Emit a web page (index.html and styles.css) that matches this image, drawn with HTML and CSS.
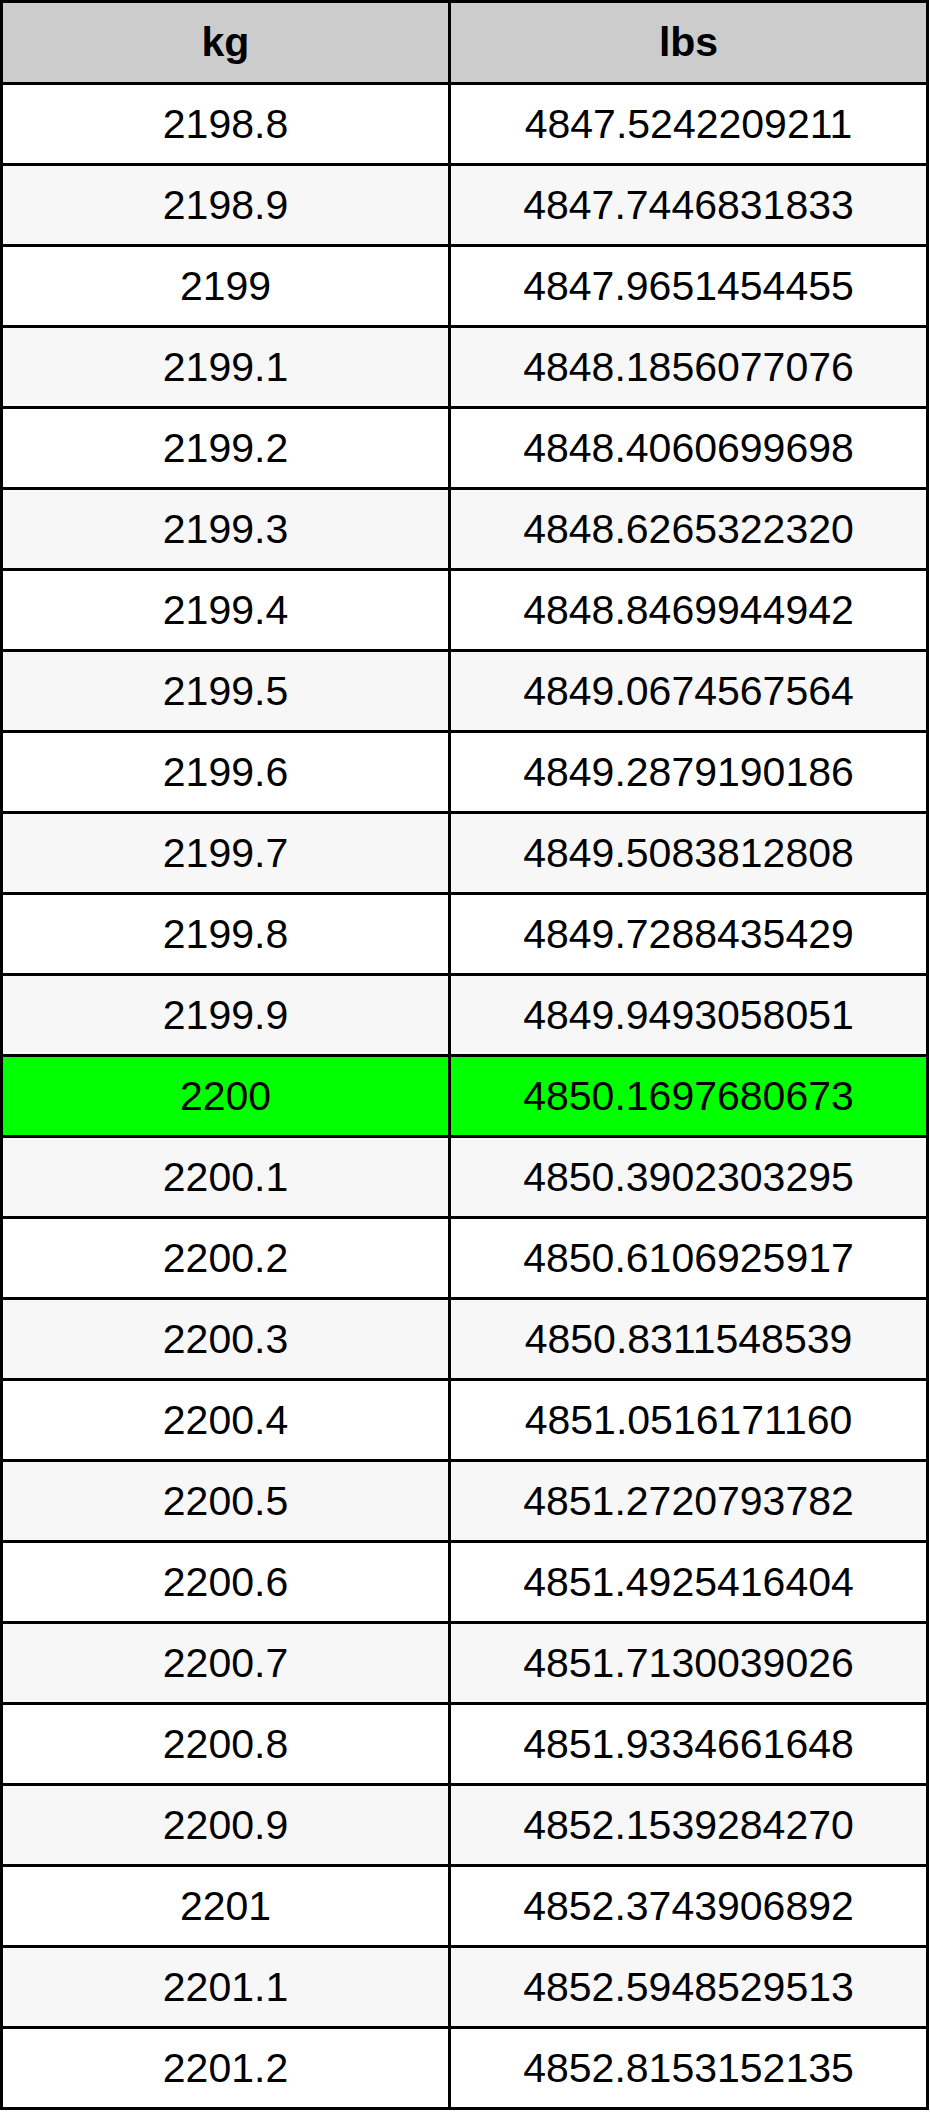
FILE: index.html
```html
<!DOCTYPE html>
<html>
<head>
<meta charset="utf-8">
<link rel="stylesheet" href="styles.css">
</head>
<body>
<table class="conv">
<thead>
<tr><th class="c1">kg</th><th class="c2">lbs</th></tr>
</thead>
<tbody>
<tr><td>2198.8</td><td>4847.5242209211</td></tr>
<tr><td>2198.9</td><td>4847.7446831833</td></tr>
<tr><td>2199</td><td>4847.9651454455</td></tr>
<tr><td>2199.1</td><td>4848.1856077076</td></tr>
<tr><td>2199.2</td><td>4848.4060699698</td></tr>
<tr><td>2199.3</td><td>4848.6265322320</td></tr>
<tr><td>2199.4</td><td>4848.8469944942</td></tr>
<tr><td>2199.5</td><td>4849.0674567564</td></tr>
<tr><td>2199.6</td><td>4849.2879190186</td></tr>
<tr><td>2199.7</td><td>4849.5083812808</td></tr>
<tr><td>2199.8</td><td>4849.7288435429</td></tr>
<tr><td>2199.9</td><td>4849.9493058051</td></tr>
<tr class="hl"><td>2200</td><td>4850.1697680673</td></tr>
<tr><td>2200.1</td><td>4850.3902303295</td></tr>
<tr><td>2200.2</td><td>4850.6106925917</td></tr>
<tr><td>2200.3</td><td>4850.8311548539</td></tr>
<tr><td>2200.4</td><td>4851.0516171160</td></tr>
<tr><td>2200.5</td><td>4851.2720793782</td></tr>
<tr><td>2200.6</td><td>4851.4925416404</td></tr>
<tr><td>2200.7</td><td>4851.7130039026</td></tr>
<tr><td>2200.8</td><td>4851.9334661648</td></tr>
<tr><td>2200.9</td><td>4852.1539284270</td></tr>
<tr><td>2201</td><td>4852.3743906892</td></tr>
<tr><td>2201.1</td><td>4852.5948529513</td></tr>
<tr><td>2201.2</td><td>4852.8153152135</td></tr>
</tbody>
</table>
</body>
</html>
```
FILE: styles.css
```css
html, body {
  margin: 0;
  padding: 0;
  background: #fff;
}
.conv {
  border-collapse: separate;
  border-spacing: 3px;
  background: #000;
  font-family: "Liberation Sans", Arial, sans-serif;
  font-size: 41px;
  color: #000;
  table-layout: fixed;
}
.conv th, .conv td {
  padding: 0;
  text-align: center;
  vertical-align: middle;
  height: 78px;
  background: #fff;
}
.conv th {
  height: 79px;
  background: #cccccc;
  font-weight: bold;
}
.conv .c1 { width: 445px; }
.conv .c2 { width: 475px; }
.conv tbody tr:nth-child(even) td { background: #f7f7f7; }
.conv tbody tr.hl td { background: #00ff00; }
```
